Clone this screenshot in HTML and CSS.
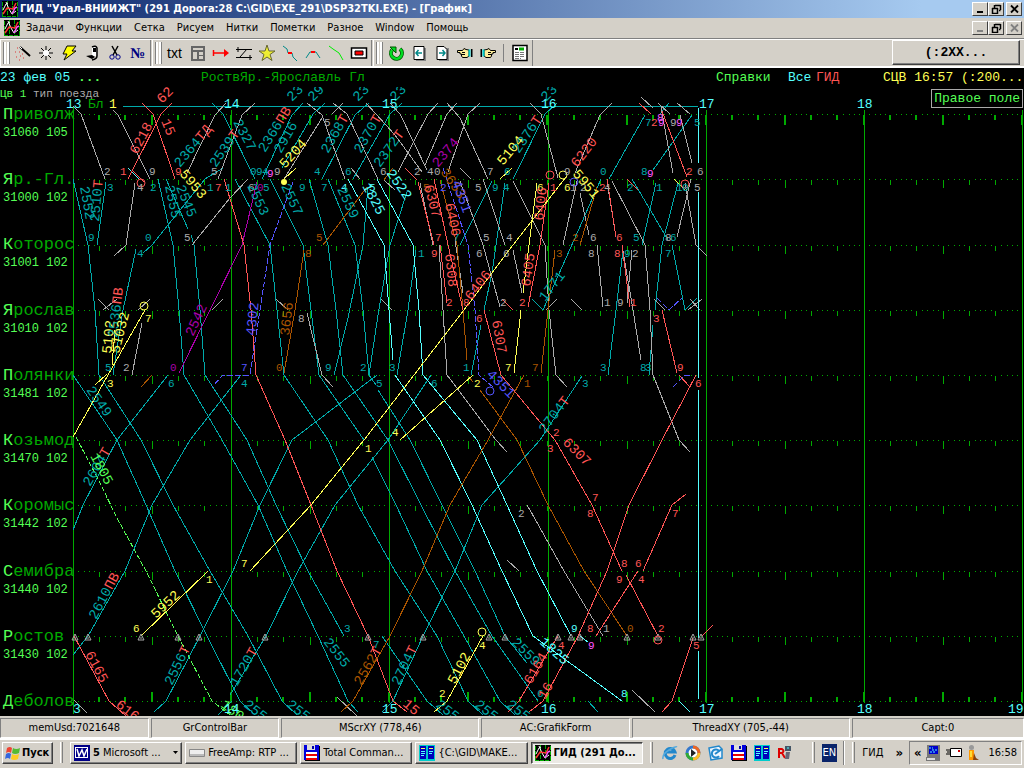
FILE: index.html
```html
<!DOCTYPE html>
<html lang="ru">
<head>
<meta charset="utf-8">
<title>ГИД "Урал-ВНИИЖТ"</title>
<link rel="stylesheet" href="styles.css">
</head>
<body>
<svg class="defs" aria-hidden="true">
  <symbol id="gid" viewBox="0 0 16 16"><path fill="#000" d="M0 0h16v16H0z"/><path d="M.5 1v14M5.500 0v16M10.500 0v16M15.500 1v14M0 15.500h16" stroke="#0a0" stroke-dasharray="4 1"/><path d="M1 9l3-6 2-1M4 1l3 7 3 5 4-3" stroke="#fff" fill="none"/><path d="M1 13l4-6 6 1 3-6" stroke="#f33" stroke-width="1.500" fill="none"/><path d="M10 13l3-6 2-1" stroke="#f5f" stroke-width="1.500" fill="none"/></symbol>
  <symbol id="floppy" viewBox="0 0 16 16"><path fill="#000" d="M1 1h15v15H1z"/><path fill="#00d" d="M0 0h15v15H0z"/><path fill="#ddd" d="M3 0h8v5H3z"/><path fill="#00a" d="M8 1h2v3H8z"/><path fill="#fff" d="M2 7h11v7H2z"/><path fill="#e00" d="M2 9h11v2H2zM2 13h11v2H2z"/></symbol>
  <symbol id="panels" viewBox="0 0 16 16"><path fill="#0cc" d="M0 0h16v16H0z"/><path fill="#00b" d="M1 1h6v13H1zM9 1h6v13H9z"/><path d="M2 3.500h4M10 3.500h4" stroke="#ff5"/><path d="M2 6.500h4M2 8.500h4M2 10.500h3M10 6.500h4M10 8.500h3" stroke="#5ff"/></symbol>
  <symbol id="mn" viewBox="0 0 11 10"><path d="M2 8h6" stroke="currentColor" stroke-width="2"/></symbol>
  <symbol id="rs" viewBox="0 0 11 10"><path d="M4 1.500h5.500M3.500 1v3M9.500 1v5M8 6.500h1.500M1 4.500h6M1.500 4v5.500h5V4" stroke="currentColor" fill="none" stroke-width="1.500"/></symbol>
  <symbol id="cl" viewBox="0 0 11 10"><path d="M2 1.500l7 7M9 1.500l-7 7" stroke="currentColor" stroke-width="1.800"/></symbol>
  <symbol id="hand" viewBox="0 0 18 12"><path d="M1.500 3.500h5L8 1.500l2 1 3 .5v6l-2 1.500H6.500L5.500 9V7H4V5.500H1.500z" fill="#ffef9a" stroke="#000"/><path d="M6 5.500h3M6 7.500h3" stroke="#000"/><path d="M12.500 2.500h2v7h-2z" fill="#0cc"/><path d="M15 2h1.500v8H15z" fill="#000"/></symbol>
</svg>

<header class="titlebar">
  <svg class="i16"><use href="#gid"/></svg>
  <h1>ГИД "Урал-ВНИИЖТ" (291 Дорога:28 C:\GID\EXE_291\DSP32TKI.EXE) - [График]</h1>
  <div class="winbtns">
    <button aria-label="Свернуть"><svg><use href="#mn"/></svg></button><button aria-label="Восстановить"><svg><use href="#rs"/></svg></button><button class="close" aria-label="Закрыть"><svg><use href="#cl"/></svg></button>
  </div>
</header>

<nav class="menubar">
  <svg class="i16"><use href="#gid"/></svg>
  <button>Задачи</button><button>Функции</button><button>Сетка</button><button>Рисуем</button><button>Нитки</button><button>Пометки</button><button>Разное</button><button>Window</button><button>Помощь</button>
  <div class="winbtns">
    <button disabled aria-label="Свернуть окно"><svg><use href="#mn"/></svg></button><button aria-label="Восстановить окно"><svg><use href="#rs"/></svg></button><button class="close" disabled aria-label="Закрыть окно"><svg><use href="#cl"/></svg></button>
  </div>
</nav>

<div class="toolbar">
  <div class="tools">
    <span class="grip"></span>
    <button aria-label="Мастер"><svg viewBox="0 0 18 18"><path d="M6 3l10 9" stroke="#000" stroke-width="2"/><path d="M6 3l2 2" stroke="#fff"/><path d="M3 4h1M1 8h1M5 8h1M8 10h1M2 13h1M6 12h1M9 14h1M5 16h1" stroke="#d33"/></svg></button>
    <button aria-label="Вспышка"><svg viewBox="0 0 18 18"><path d="M9 2v14M2 9h14M4 4l10 10M14 4L4 14" stroke="#000"/><circle cx="9" cy="9" r="3" fill="#fff"/></svg></button>
    <button aria-label="Молния"><svg viewBox="0 0 18 18"><path d="M7 2h9l-4 5h4L4 16l3-6H3z" fill="#ff0" stroke="#000"/></svg></button>
    <button aria-label="Объект"><svg viewBox="0 0 18 18"><path d="M9 3h4v9H9z" fill="#fff"/><path d="M9 3q4-2 5 1v8q0 3-5 4" fill="none" stroke="#000" stroke-width="1.500"/><path d="M10 4h3v4h-3zM3 12l6-1 3 2-3 2z" fill="#000"/></svg></button>
    <button aria-label="Вырезать"><svg viewBox="0 0 18 18"><path d="M6 2l5 9M12 2L7 11" stroke="#000" stroke-width="1.500"/><circle cx="6" cy="13" r="2.200" fill="none" stroke="#008"/><circle cx="12" cy="13" r="2.200" fill="none" stroke="#008"/></svg></button>
    <button class="num">№</button>
  </div>
  <div class="tools">
    <span class="grip"></span>
    <button class="txt">txt</button>
    <button aria-label="Таблица"><svg viewBox="0 0 18 18"><path d="M3 3h12v13H3zM3 7h12M9 7v9" fill="none" stroke="#666" stroke-width="2"/><path d="M9 11.500h6" stroke="#666"/></svg></button>
    <button aria-label="Отрезок"><svg viewBox="0 0 18 18"><path d="M1.500 6v6M1 9h13" stroke="#f00" stroke-width="1.500"/><path d="M12 5l5 4-5 4z" fill="#f00"/></svg></button>
    <button aria-label="Пути"><svg viewBox="0 0 18 18"><path d="M1 5.500h16M1 13.500h16M5 13l7-8M3 3v5M15 11v5" stroke="#000" fill="none"/></svg></button>
    <button aria-label="Звезда"><svg viewBox="0 0 18 18"><path d="M9 1l2 6h6l-5 3.500 2 6-5-3.500-5 3.500 2-6L1 7h6z" fill="#ee3" stroke="#663"/></svg></button>
    <button aria-label="Нитка"><svg viewBox="0 0 18 18"><path d="M2 2l4 3 1 4h4l1 4 4 4" fill="none" stroke="#088"/><path d="M7 9h4" stroke="#f00" stroke-width="2"/></svg></button>
    <button aria-label="Дуга"><svg viewBox="0 0 18 18"><path d="M2 14l4-6h6l4 6" fill="none" stroke="#088"/><path d="M7 8h4" stroke="#f00" stroke-width="2"/></svg></button>
    <button aria-label="Линия"><svg viewBox="0 0 18 18"><path d="M2 2l4 3 6 4 4 7" fill="none" stroke="#0e0"/></svg></button>
    <button aria-label="Рамка"><svg viewBox="0 0 18 18"><path d="M1.500 4h15v10h-15z" fill="#fff" stroke="#000" stroke-width="1.500"/><path d="M5 7h8v4H5z" fill="#f00" stroke="#000"/></svg></button>
  </div>
  <div class="tools">
    <span class="grip"></span>
    <button aria-label="Обновить"><svg viewBox="0 0 18 18"><path d="M5 6a5.500 5.500 0 1 0 8-1" fill="none" stroke="#050" stroke-width="4"/><path d="M5 6a5.500 5.500 0 1 0 8-1" fill="none" stroke="#0d2" stroke-width="2.500"/><path d="M3 3h6v6z" fill="#0d2" stroke="#050"/></svg></button>
    <button aria-label="Назад"><svg viewBox="0 0 18 18"><path d="M6 4h10v13H6z" fill="#888"/><path d="M4 2.500h10v13H4z" fill="#fff" stroke="#000"/><path d="M12 9H6m2.500-3L6 9l2.500 3" fill="none" stroke="#088" stroke-width="1.500"/></svg></button>
    <button aria-label="Вперёд"><svg viewBox="0 0 18 18"><path d="M6 4h10v13H6z" fill="#888"/><path d="M4 2.500h7l3 3v10H4z" fill="#fff" stroke="#000"/><path d="M6 9h6M9.500 6L12 9l-2.500 3" fill="none" stroke="#088" stroke-width="1.500"/></svg></button>
    <button aria-label="Влево"><svg class="hand"><use href="#hand"/></svg></button>
    <button aria-label="Вправо"><svg class="hand flip"><use href="#hand"/></svg></button>
    <span class="sep"></span>
    <button aria-label="Отчёт"><svg viewBox="0 0 18 18"><path d="M2 1.500h14v15H2z" fill="#fff" stroke="#000" stroke-width="1.500"/><path d="M4 5h3" stroke="#000" stroke-width="2"/><path d="M8 5h5" stroke="#0a0" stroke-width="3"/><path d="M4 8.500h10M4 10.500h9M4 12.500h10M4 14.500h6" stroke="#777" stroke-dasharray="4 1"/></svg></button>
  </div>
  <button class="mode">(:2XX...</button>
</div>

<div class="infoline">
  <span class="cy">23 фев 05 <b>...</b></span><span class="gr">РоствЯр.-Ярославль Гл</span><span class="lg">Справки</span><span class="cy">Все</span><span class="rd">ГИД</span><span class="ye">СЦВ 16:57 (:200...</span>
</div>

<main class="chart">
  <div class="side">
    <p class="legend">Цв 1 <i>тип поезда</i></p>
    <ol class="stations">
      <li><span>Приволж</span><small>31060 105</small></li>
      <li><span>Яр.-Гл.</span><small>31000 102</small></li>
      <li><span>Которос</span><small>31001 102</small></li>
      <li><span>Ярослав</span><small>31010 102</small></li>
      <li><span>Полянки</span><small>31481 102</small></li>
      <li><span>Козьмод</span><small>31470 102</small></li>
      <li><span>Коромыс</span><small>31442 102</small></li>
      <li><span>Семибра</span><small>31440 102</small></li>
      <li><span>Ростов</span><small>31430 102</small></li>
      <li><span>Деболов</span></li>
    </ol>
  </div>
  <svg class="graph" viewBox="73 87 951 629" preserveAspectRatio="xMinYMin meet" role="img" aria-label="График движения поездов">
    <defs>
      <path id="hd" d="M5 0h1m5 0h1m4 0h1m4 0h1m10 0h1m4 0h1m4 0h1m4 0h1m10 0h1m4 0h1m5 0h1m4 0h1m9 0h1m5 0h1m4 0h1m4 0h1m10 0h1m4 0h1m4 0h1m5 0h1m9 0h1m5 0h1m4 0h1m4 0h1"/>
      <path id="ht" d="M26.500 0v5M52.500 0v5M79.500 0v8M105.500 0v5M131.500 0v5M158.500 0v5"/>
      <g id="hour"><use href="#hd"/><use href="#ht"/></g>
      <g id="row"><use href="#hour" x="73"/><use href="#hour" x="231"/><use href="#hour" x="389"/><use href="#hour" x="548"/><use href="#hour" x="706"/><use href="#hour" x="864"/></g>
      <g id="edge"><use href="#hd"/><path stroke-width="2" d="M26 0v5M52 0v5M105 0v5M131 0v5"/><path stroke-width="2" d="M79 0v10M158 0v10"/></g>
      <g id="edges"><use href="#edge" x="73"/><use href="#edge" x="231"/><use href="#edge" x="389"/><use href="#edge" x="548"/><use href="#edge" x="706"/><use href="#edge" x="864"/></g>
      <path id="tri" d="M-3 3L0-3 3 3zM-1 1h2"/>
    </defs>

    <g class="grid">
      <path d="M73.500 106V714M231.500 110V703M389.500 110V703M548.500 110V703M706.500 110V703M864.500 110V703M1022.500 110V703"/>
      <use href="#edges" y="114.500"/><use href="#row" y="179.500"/><use href="#row" y="245.500"/><use href="#row" y="310.500"/><use href="#row" y="375.500"/><use href="#row" y="440.500"/><use href="#row" y="505.500"/><use href="#row" y="571.500"/><use href="#row" y="636.500"/>
      <use href="#edges" transform="translate(0 701.500) scale(1 -1)"/>
    </g>

    <g class="threads">
      <path class="te" d="M123 106.500H698
M73 179L88 245L95 310L99 375L141 440L173 505L210 571L248 636L282 701L297 715
M106 182L97 245M136 249L123 310L113 375
M158 179L173 245L179 310L184 375L222 440L258 505L287 571L318 636L348 701L358 712
M166 179L188 229M191 235L194 245L200 310L205 375L247 440L276 505L308 571L344 636
M205 179L152 245L143 253M212 103L223 114L255 179M223 168L205 179
M303 103L292 115L262 179M325 103L313 114L282 168
M235 179L270 245L277 310L284 375L328 440L358 505L395 571L437 636L468 701L483 715
M270 179L303 245L311 310L319 375L364 440M372 457L396 505L427 571L464 636L500 701L515 715
M309 179L328 245L336 310L343 375L388 440L421 505L455 571L492 636L538 701
M328 179L355 245L363 310L369 375L376 385M378 390L410 440L442 505L475 571L505 636L527 663
M369 103L355 115L322 179M402 103L390 114L353 179
M407 192L390 245L378 315L369 375M368 187L363 245L348 318L334 375M416 250L408 310L397 375
M377 375L292 440L260 505L233 571L200 636L166 701L154 712
M431 375L388 440L335 505L298 571L266 636L230 695
M241 375L190 440L152 505L125 571L88 636L73 655
M168 375L117 440L83 505L73 530
M73 375L117 440L146 505L175 571L207 636L240 701L255 715
M582 376L540 440L482 505L455 571L423 636L393 701L382 712
M382 636L427 701L443 715M557 103L545 114L513 179M645 115L609 179M692 115L653 170
M492 181L460 245M505 183L492 273L484 310M481 325L471 375
M601 179L543 310L532 299M632 179L668 240M656 183L642 245
M678 183L662 245L655 310M653 325L649 375M672 245L685 310L697 298M623 250L616 310L608 375
M588 701L598 712M669 103L660 114M218 715L232 701"/>
      <path class="wh" d="M73 106L81 114L105 179M113 110L118 115L150 179M226 103L215 115L187 173M255 103L242 115L218 179
M135 183L126 245L114 256M248 179L230 198L192 245M307 103L322 115L345 179M322 118L284 179
M333 103L347 114L378 179M343 103L332 114M366 103L395 135L422 172M390 103L400 114L427 170M438 103L428 114L398 172
M447 103L460 118L488 179M457 103L447 114L425 165M480 103L468 114L448 172M530 103L541 114L558 178
M612 103L600 115L575 173M641 97L653 108M661 107L673 173M677 103L690 114M680 115L692 163M658 103L670 114
M483 179L505 245M513 181L545 245L549 310L556 375L567 387M577 181L563 245M580 193L589 235
M612 181L645 245L650 310L653 375L679 440L690 452M460 181L483 245L500 307M513 250L522 293
M597 245L603 307M607 181L616 237M691 179L677 237M685 183L696 245L707 256M622 245L633 310L641 360M632 250L627 303
M420 183L433 245M439 245L443 310L447 375L496 440L507 452M455 240L463 293
M98 299L109 310M117 299L103 310M150 299L138 310M223 299L212 310M276 299L288 310M381 299L392 310M571 299L582 310M654 299L665 310M702 299L688 310M690 299L700 310M557 299L546 310
M307 313L322 375L333 387M142 323L132 375M337 697L357 716M74 700L87 713M507 560L519 571
M527 505L530 510L564 571L603 636M632 690L655 712M351 168L360 179M460 168L471 179M384 180L395 190"/>
      <path class="cy2" d="M348 179L384 245L389 310L393 360M395 375L440 440L472 505L502 571L533 636L622 701M377 179L413 245L419 310L423 375L477 440L507 505L537 571L571 636M128 168L140 180M580 636L588 642M679 701L690 712"/>
      <path class="or" d="M367 187L323 245M304 250L295 310L284 373M384 180L393 168M440 180L457 245L463 310L467 360M468 376L473 382M480 390L517 440L548 505L584 571L627 636M524 375L488 440L450 505L422 571L390 636L353 701L341 712M597 187L580 245M555 250L548 310L541 373M152 375L141 387"/>
      <path class="pu" d="M257 182L242 245L210 310L179 373"/>
      <path class="re" d="M142 103L153 114L175 179M172 103L161 114L128 179M132 170L144 182M224 179L244 245L251 310L256 375L285 440L311 505L337 571L368 636L393 701L407 712
M418 182L434 245M440 245L447 303M434 179L448 245L463 310M405 168L417 180M549 183L540 245L528 307M607 179L616 237M622 245L630 307
M662 111L687 177M639 103L651 114M627 179L638 190M484 310L501 375L555 440L592 505L622 571M626 575L658 636M662 310L677 373M679 375L690 387
M696 375L662 440L629 505L607 571L578 636L543 701L529 712M686 494L672 505L643 571M638 571L596 636M558 636L519 701L508 712
M693 638L672 701L662 712M713 625L702 636M74 636L109 701L126 716M502 299L513 310"/>
      <path class="bl" d="M293 182L270 245L260 310L250 375H223L212 387M443 168L468 245L475 310L479 375L493 387M673 387L685 375H692M657 298L669 310L682 298"/>
      <path class="li" d="M76 437L100 483L117 518L146 571L178 636L212 701L230 715"/>
      <path class="yl" d="M566 177L513 245L464 310L364 440L311 505L250 571M473 375L400 440M537 183L529 245L523 293M521 310L514 373M145 310L108 375M108 375L73 437M115 330L112 365M95 385L107 374M208 571L141 636M483 636L447 701L434 712M296 168L284 179M512 168L500 179M674 179L685 190"/>
    </g>
    <path class="now" d="M698.500 108V163M698.500 192V378M698.500 390V638M698.500 651V699"/>

    <g class="wh marks"><use href="#tri" x="75" y="637"/><use href="#tri" x="88" y="637"/><use href="#tri" x="141" y="637"/><use href="#tri" x="178" y="637"/><use href="#tri" x="199" y="637"/><use href="#tri" x="265" y="637"/><use href="#tri" x="368" y="637"/><use href="#tri" x="423" y="637"/><use href="#tri" x="489" y="637"/><use href="#tri" x="505" y="637"/><use href="#tri" x="558" y="637"/><use href="#tri" x="571" y="637"/><use href="#tri" x="580" y="637"/><use href="#tri" x="627" y="637"/><use href="#tri" x="658" y="637"/><use href="#tri" x="693" y="637"/><use href="#tri" x="701" y="637"/></g>
    <g class="marks"><circle class="yl" cx="482" cy="632" r="4"/><circle class="yl" cx="144" cy="306" r="4"/><circle class="yl" cx="563" cy="175" r="4"/><circle class="re" cx="550" cy="175" r="4"/><circle class="re" cx="685" cy="184" r="4"/><circle class="re" cx="658" cy="640" r="4"/><circle class="re" cx="141" cy="183" r="4"/><circle class="bs" cx="490" cy="391" r="4"/><circle class="bs" cx="574" cy="182" r="4"/><circle class="dot" cx="284" cy="182" r="3"/></g>

    <g class="digits">
      <text class="twh" x="324 670" y="126">59</text><text class="tte" x="645 694" y="126">75</text><text class="tre" x="651" y="126">2</text><text class="tpk" x="658 676" y="126">99</text><text class="tpk" x="657" y="121">8</text>
      <text class="twh" x="104 149 211 274 380 414 427 434 487 564 697" y="175">29596240796</text><text class="tre" x="120 175 686" y="175">192</text><text class="tte" x="250 256 262 314 345 504 600 641" y="175">09446608</text><text class="tpk" x="267 647" y="177">99</text>
      <text class="tte" x="107 150 207 225 263 299 321 492 503 627 656 676 682" y="191">3211597942110</text><text class="twh" x="137 248 475 570 580 604 694" y="191">4651245</text><text class="tre" x="215 550 599" y="191">712</text><text class="tpu" x="257" y="191">0</text><text class="tcy" x="341 369" y="191">45</text><text class="tor" x="423" y="191">5</text><text class="tbl" x="440" y="191">2</text><text class="tye" x="537 564" y="191">66</text>
      <text class="tte" x="88 145 453 633 670" y="241">90756</text><text class="twh" x="184 483 506 590 665" y="241">55468</text><text class="tor" x="316 572" y="241">52</text><text class="tre" x="435 616" y="241">76</text>
      <text class="tte" x="137 418 624 665" y="257">4197</text><text class="twh" x="476 503 588 632" y="257">6682</text><text class="tor" x="305 556" y="257">83</text><text class="tre" x="431 614" y="257">98</text>
      <text class="tre" x="446 463 519 630" y="306">2821</text><text class="twh" x="500 604 617" y="306">219</text>
      <text class="tye" x="145" y="322">7</text><text class="twh" x="298" y="322">8</text><text class="tre" x="476 653" y="322">63</text>
      <text class="tte" x="105 325 360 389 463 600 640 645" y="371">59231383</text><text class="twh" x="123" y="371">2</text><text class="tpu" x="170" y="371">0</text><text class="tbl" x="241" y="371">7</text><text class="tor" x="276 532" y="371">07</text><text class="tye" x="505" y="371">7</text><text class="tre" x="677" y="371">9</text>
      <text class="tye" x="107 474" y="387">32</text><text class="tte" x="168 241 376 431 582" y="387">64563</text><text class="tor" x="524" y="387">1</text><text class="tre" x="695" y="387">6</text>
      <text class="tye" x="392" y="436">4</text><text class="tre" x="553" y="436">2</text><text class="tye" x="365" y="452">1</text><text class="tre" x="547" y="452">3</text>
      <text class="tre" x="592" y="501">7</text><text class="tre" x="587 672" y="517">87</text><text class="twh" x="518" y="517">2</text>
      <text class="tye" x="241" y="567">7</text><text class="tre" x="621 635" y="567">86</text><text class="tye" x="206" y="583">1</text><text class="tre" x="616 638" y="583">94</text>
      <text class="tye" x="133" y="632">6</text><text class="tte" x="344" y="632">3</text><text class="tcy" x="571" y="632">9</text><text class="tre" x="587 658" y="632">82</text><text class="twh" x="603" y="632">1</text><text class="tor" x="627" y="632">0</text>
      <text class="tye" x="479" y="649">4</text><text class="tre" x="558 693" y="649">45</text><text class="tte" x="373" y="648">7</text><text class="tpk" x="588" y="649">9</text><text class="tye" x="439" y="697">2</text><text class="tcy" x="621" y="697">8</text><text class="tte" x="537" y="697">6</text>
    </g>

    <g class="trains">
      <text class="tre" transform="translate(162 104) rotate(-45)">62</text><text class="tte" transform="translate(292 102) rotate(-45)">23</text><text class="tte" transform="translate(313 102) rotate(-45)">29</text><text class="tte" transform="translate(358 102) rotate(-45)">23</text><text class="tte" transform="translate(395 102) rotate(-45)">23</text><text class="tte" transform="translate(546 102) rotate(-45)">23</text>
      <text class="tre" transform="translate(137 155) rotate(-62)">6218</text><text class="tre" transform="translate(161 121) rotate(68)">15</text>
      <text class="tte" transform="translate(180 168) rotate(-50)">2364<tspan class="tre">ТД</tspan></text><text class="tte" transform="translate(216 168) rotate(-55)">2539<tspan class="tre">Т</tspan></text>
      <text class="tye" transform="translate(179 174) rotate(50)">5953</text><text class="tte" transform="translate(165 186) rotate(78)">2555</text><text class="tte" transform="translate(176 187) rotate(68)">2545</text>
      <text class="tte" transform="translate(80 187) rotate(80)">2552</text><text class="tte" transform="translate(99 222) rotate(-85)">2510<tspan class="tre">Т</tspan></text>
      <text class="tte" transform="translate(233 122) rotate(62)">2327</text><text class="tte" transform="translate(265 153) rotate(-58)">2366<tspan class="tre">ПВ</tspan></text><text class="tte" transform="translate(281 154) rotate(-60)">2916</text><text class="tye" transform="translate(285 169) rotate(-48)">5204</text>
      <text class="tte" transform="translate(328 154) rotate(-60)">2368<tspan class="tre">Т</tspan></text><text class="tte" transform="translate(361 154) rotate(-60)">2370<tspan class="tre">Т</tspan></text><text class="tte" transform="translate(380 168) rotate(-54)">2372<tspan class="tre">Т</tspan></text><text class="tpu" transform="translate(438 168) rotate(-50)">2374</text>
      <text class="tte" transform="translate(247 186) rotate(65)">2553</text><text class="tte" transform="translate(281 186) rotate(65)">2557</text><text class="tte" transform="translate(337 189) rotate(65)">2559</text><text class="tcy" transform="translate(362 186) rotate(62)">1825</text><text class="tcy" transform="translate(386 173) rotate(55)">2522</text>
      <text class="tre" transform="translate(424 186) rotate(75)">6307</text><text class="tre" transform="translate(445 204) rotate(78)">6406</text><text class="tre" transform="translate(445 254) rotate(84)">6308</text><text class="tor" transform="translate(440 172) rotate(55)">3653</text><text class="tbl" transform="translate(452 182) rotate(70)">4351</text>
      <text class="tye" transform="translate(503 166) rotate(-50)">5104</text><text class="tte" transform="translate(519 154) rotate(-56)">2376<tspan class="tre">Т</tspan></text><text class="tre" transform="translate(577 168) rotate(-52)">6220</text><text class="tye" transform="translate(572 174) rotate(50)">5951</text>
      <text class="tre" transform="translate(543 221) rotate(-84)">6406</text><text class="tre" transform="translate(530 287) rotate(-82)">6405</text><text class="tre" transform="translate(471 301) rotate(-52)">6406</text><text class="tte" transform="translate(545 302) rotate(-52)">1771</text>
      <text class="tye" transform="translate(111 354) rotate(-84)">5102</text><text class="tte" transform="translate(117 338) rotate(-83)">2536<tspan class="tre">ПВ</tspan></text><text class="tye" transform="translate(119 354) rotate(-76)">51032</text><text class="tpu" transform="translate(193 337) rotate(-65)">2542</text><text class="tbl" transform="translate(255 336) rotate(-84)">4302</text><text class="tor" transform="translate(289 336) rotate(-83)">3656</text>
      <text class="tte" transform="translate(86 390) rotate(55)">2549</text><text class="tte" transform="translate(90 487) rotate(-60)">2604<tspan class="tre">Т</tspan></text><text class="tli" transform="translate(90 456) rotate(62)">1805</text>
      <text class="tbl" transform="translate(486 375) rotate(45)">4351</text><text class="tre" transform="translate(492 321) rotate(80)">6307</text><text class="tte" transform="translate(545 434) rotate(-53)">2704<tspan class="tre">Т</tspan></text><text class="tre" transform="translate(562 443) rotate(45)">6307</text>
      <text class="tte" transform="translate(96 620) rotate(-62)">2610<tspan class="tre">ПВ</tspan></text><text class="tye" transform="translate(156 619) rotate(-43)">5952</text><text class="tre" transform="translate(85 654) rotate(62)">6165</text><text class="tte" transform="translate(172 686) rotate(-64)">2556<tspan class="tre">Т</tspan></text><text class="tre" transform="translate(115 706) rotate(38)">616</text>
      <text class="tte" transform="translate(237 687) rotate(-60)">1720<tspan class="tre">Т</tspan></text><text class="tte" transform="translate(323 642) rotate(52)">2555</text><text class="tor" transform="translate(361 686) rotate(-60)">2562<tspan class="tre">Т</tspan></text><text class="tte" transform="translate(399 686) rotate(-64)">2704<tspan class="tre">Т</tspan></text><text class="tye" transform="translate(455 685) rotate(-62)">5102</text>
      <text class="tli" transform="translate(220 706) rotate(38)">180</text><text class="tte" transform="translate(243 706) rotate(38)">255</text><text class="tte" transform="translate(286 706) rotate(38)">255</text><text class="tre" transform="translate(402 705) rotate(40)">15</text><text class="tte" transform="translate(435 706) rotate(38)">255</text><text class="tte" transform="translate(474 706) rotate(38)">255</text><text class="tte" transform="translate(506 706) rotate(38)">255</text>
      <text class="tcy" transform="translate(539 643) rotate(42)">1825</text><text class="tte" transform="translate(511 643) rotate(45)">2559</text><text class="tre" transform="translate(531 685) rotate(-60)">6164</text><text class="tre" transform="translate(545 700) rotate(-60)">16</text>
    </g>

    <g class="hours">
      <text x="66" y="108">13</text><text x="224" y="108">14</text><text x="382" y="108">15</text><text x="541" y="108">16</text><text x="699" y="108">17</text><text x="857" y="108">18</text>
      <text x="73" y="713">3</text><text x="224" y="713">14</text><text x="382" y="713">15</text><text x="541" y="713">16</text><text x="699" y="713">17</text><text x="857" y="713">18</text><text x="1008" y="713">19</text>
      <text class="tgr" x="88" y="108">Бл</text><text class="tye" x="109" y="108">1</text>
    </g>
  </svg>
  <button class="field">Правое поле</button>
</main>

<footer class="status"><span>memUsd:7021648</span><span>GrControlBar</span><span>MScrXY (778,46)</span><span>AC:GrafikForm</span><span>ThreadXY (705,-44)</span><span>Capt:0</span></footer>

<div class="taskbar">
  <button class="start"><svg class="i16" viewBox="0 0 16 16"><path fill="#e43" d="M2 3q3-2 5 0L6 8Q4 6 1 8z"/><path fill="#5b3" d="M8 3q3 2 7 0l-1 5q-4 2-7 0z"/><path fill="#36d" d="M1 9q3-2 5 0l-1 5q-2-2-5 0z"/><path fill="#fc2" d="M7 9q3 2 7 0l-1 5q-4 2-7 0z"/></svg>Пуск</button>
  <span class="grip one"></span>
  <div class="tasks">
    <button><svg class="i16" viewBox="0 0 16 16"><path fill="#008" d="M0 0h16v16H0z"/><path fill="#fff" d="M1 2h13v11H1z"/><path fill="#008" d="M2 3h11v9H2z"/><path d="M3 4l2 7 3-6 2 6 3-7" fill="none" stroke="#fff" stroke-width="1.500"/></svg><span><b>5</b> Microsoft ...</span><svg class="arrow" viewBox="0 0 5 3"><path d="M0 0h5L2.500 3z"/></svg></button>
    <button><svg class="i16" viewBox="0 0 16 16"><rect x="0" y="4" width="16" height="8" rx="1" fill="#888"/><path fill="#eee" d="M1 5h14v4H1z"/><path fill="#bbb" d="M1 9h14v2H1z"/></svg><span>FreeAmp: RTP ...</span></button>
    <button><svg class="i16"><use href="#floppy"/></svg><span>Total Comman...</span></button>
    <button><svg class="i16"><use href="#panels"/></svg><span>{C:\GID\MAKE...</span></button>
    <button class="active"><svg class="i16"><use href="#gid"/></svg><span>ГИД (291 До...</span></button>
  </div>
  <span class="grip one"></span>
  <div class="quick">
    <a href="#ie" aria-label="Internet Explorer"><svg class="i16" viewBox="0 0 16 16"><path d="M13 10a5 5 0 1 1 0-3H4" fill="none" stroke="#28c" stroke-width="3"/><path d="M1 14Q0 9 7 5t8-3" fill="none" stroke="#5ad" stroke-width="1.500"/></svg></a>
    <a href="#media" aria-label="Media Player"><svg class="i16" viewBox="0 0 16 16"><circle cx="8" cy="8" r="6" fill="#fff" stroke="#37c" stroke-width="3"/><path d="M8 2a6 6 0 0 1 6 6" fill="none" stroke="#e62" stroke-width="3"/><path d="M14 8a6 6 0 0 1-6 6" fill="none" stroke="#fb2" stroke-width="3"/><path d="M2 8a6 6 0 0 0 6 6" fill="none" stroke="#3a3" stroke-width="3"/><path d="M6 4l5 4-5 4z" fill="#222"/></svg></a>
    <a href="#mail" aria-label="Outlook Express"><svg class="i16" viewBox="0 0 16 16"><path d="M1 3l10-2 3 3v9l-11 2z" fill="#eef6ff" stroke="#28c" stroke-width="1.500"/><path d="M11 6a4 4 0 1 0 0 5M7 9l7-5" fill="none" stroke="#28c" stroke-width="2"/></svg></a>
    <a href="#save" aria-label="Total Commander"><svg class="i16"><use href="#floppy"/></svg></a>
    <a href="#far" aria-label="FAR"><svg class="i16"><use href="#panels"/></svg></a>
    <a href="#radmin" aria-label="Remote"><svg class="i16" viewBox="0 0 16 16"><path d="M2 13V4h3q3 2 0 4H2m3 0l3 5" fill="none" stroke="#d00" stroke-width="2"/><path d="M8 1h6v5H8z" fill="#456"/><path d="M9 7h4l-1 7H8z" fill="#667"/><path d="M10 3h2" stroke="#5ff"/></svg></a>
  </div>
  <span class="grip one"></span>
  <span class="lang">EN</span>
  <span class="divider"></span>
  <span class="grip one"></span>
  <span class="band">ГИД <b>»</b></span>
  <div class="tray"><b>«</b>
    <svg class="i16" viewBox="0 0 16 16"><path fill="#777" d="M1 0h13v12H1zM0 12h14v4H0z"/><path fill="#00c" d="M3 1h9v8H3z"/><path d="M3 3h4M6 5h5M4 7h6" stroke="#5ff" stroke-dasharray="2 1"/><path fill="#ddd" d="M1 13h8v2H1z"/></svg>
    <svg class="i16" viewBox="0 0 16 16"><path fill="#fff" stroke="#000" d="M4.500 3.500h11v8h-11z"/><path fill="#c00" d="M12 5h2v2h-2z"/><path d="M0 5h4M1 7h4M0 9h4" stroke="#000"/></svg>
    <svg class="i16" viewBox="0 0 16 16"><path fill="#f90" d="M3 5h5v10H3z"/><path fill="#fd3" d="M4 6h2v6H4z"/><circle cx="5.500" cy="2.500" r="2.500" fill="#999"/><path fill="#841" d="M8 8l2 5 3 2H7z"/></svg>
    <time>16:58</time>
  </div>
</div>
</body>
</html>
```

FILE: styles.css
```css
* { box-sizing: border-box; }
body {
  margin: 0;
  min-height: 100vh;
  display: flex;
  flex-direction: column;
  overflow: hidden;
  background: #d4d0c8;
  color: #000;
  font: 11px/14px "DejaVu Sans Condensed", "DejaVu Sans", sans-serif;
}
button { font: inherit; color: inherit; background: none; border: 0; padding: 0; white-space: nowrap; }
svg { display: block; flex: none; }
.defs { position: absolute; width: 0; height: 0; }
.i16 { width: 16px; height: 16px; }

.titlebar, .menubar { display: flex; align-items: center; padding: 0 2px; }
.titlebar { height: 18px; background: linear-gradient(90deg, #0a246a, #a6caf0 90%); color: #fff; }
.titlebar h1 { flex: 1; margin: 0 2px; font-size: 11px; line-height: 14px; white-space: nowrap; }
.menubar { height: 21px; padding-left: 4px; border-bottom: 1px solid #808080; }
.menubar > button { padding: 0 6px; }
.winbtns { display: flex; margin-left: auto; }
.winbtns button {
  width: 16px; height: 14px;
  display: flex; align-items: center; justify-content: center;
  background: #d4d0c8; color: #000;
  border: 1px solid; border-color: #fff #404040 #404040 #fff;
}
.winbtns svg { width: 11px; height: 10px; }
.winbtns .close { margin-left: 2px; }
.winbtns button:disabled { color: #808080; }

.toolbar { display: flex; height: 29px; border-top: 1px solid #fff; border-bottom: 2px solid #fff; }
.tools { display: flex; align-items: center; border-right: 1px solid #808080; border-left: 1px solid #fff; padding: 0 1px; margin-right: 1px; }
.tools button { width: 23px; height: 24px; display: flex; align-items: center; justify-content: center; }
.tools svg { width: 18px; height: 18px; }
.tools svg.hand { width: 18px; height: 12px; }
.flip { transform: scaleX(-1); }
.tools .num { color: #000080; font: bold 15px/16px "Liberation Serif", serif; }
.tools .txt { font: 14px/16px "Liberation Sans", sans-serif; }
.grip { width: 7px; height: 22px; margin: 0 1px; border: solid; border-width: 0 1px; border-color: #808080; box-shadow: inset 2px 0 #fff, inset -2px 0 #fff; }
.grip.one { width: 3px; height: 21px; border-width: 0 1px 0 0; box-shadow: inset 1px 0 #fff; }
.sep { width: 1px; height: 18px; margin: 0 4px; background: #808080; }
.mode { width: 128px; height: 25px; margin: 0 4px 0 auto; border: 1px solid; border-color: #fff #404040 #404040 #fff; box-shadow: inset -1px -1px #808080; font: bold 13px/16px "Liberation Mono", monospace; }

.infoline {
  display: grid;
  grid-template-columns: 201fr 515fr 72fr 28fr 67fr 141fr;
  height: 19px;
  background: #000;
  font: 13px/19px "Liberation Mono", monospace;
  white-space: nowrap;
}
.infoline span { min-width: 0; }
.cy { color: #55ffff; }
.gr { color: #00aa00; }
.lg, .cy b { color: #55ff55; }
.rd { color: #ff5555; }
.ye { color: #ffff55; }

.chart { position: relative; flex: 1; display: grid; grid-template-columns: 73px 1fr; background: #000; overflow: hidden; font-family: "Liberation Mono", monospace; }
.side { display: flex; flex-direction: column; white-space: nowrap; }
.legend { margin: 0; height: 19px; font-size: 11px; line-height: 14px; color: #55ff55; }
.legend i { color: #aaa; font-style: normal; }
.stations { flex: 1; margin: 0; padding: 0 0 0 3px; list-style: none; display: grid; grid-template-rows: repeat(9, 1fr) 23px; }
.stations span { display: block; font-size: 17px; line-height: 18px; color: #00aa00; }
.stations span::first-letter { color: #55ff55; }
.stations small { display: block; font-size: 12px; line-height: 18px; color: #55ff55; }
.graph { width: 100%; height: 100%; overflow: visible; }
.field { position: absolute; top: 2px; right: 1px; padding: 0 2px; border: 1px solid #aaa; background: #000; color: #55ff55; font-size: 13px; line-height: 17px; }

.grid { stroke: #00aa00; fill: none; shape-rendering: crispEdges; }
.threads { fill: none; shape-rendering: crispEdges; }
.marks { fill: none; }
.te { stroke: #00aaaa; }
.wh { stroke: #aaaaaa; }
.cy2 { stroke: #55ffff; }
.re { stroke: #ff5555; }
.yl { stroke: #ffff55; }
.or { stroke: #aa5500; }
.pu { stroke: #aa00aa; }
.bl { stroke: #5555ff; stroke-dasharray: 6 2; }
.bs { stroke: #5555ff; }
.li { stroke: #55ff55; stroke-dasharray: 5 2; }
.dot { fill: #ffff55; }
.now { stroke: #55ffff; shape-rendering: crispEdges; }
.digits { font-size: 11px; }
.trains { font-size: 14px; }
.hours { font-size: 13px; fill: #55ffff; }
.tte { fill: #00aaaa; }
.twh { fill: #aaaaaa; }
.tcy { fill: #55ffff; }
.tre { fill: #ff5555; }
.tye { fill: #ffff55; }
.tor { fill: #aa5500; }
.tpu { fill: #aa00aa; }
.tpk { fill: #ff55ff; }
.tbl { fill: #5555ff; }
.tli { fill: #55ff55; }
.tgr { fill: #00aa00; }

.status { display: grid; grid-template-columns: 150fr 130fr 200fr 150fr 220fr 174fr; gap: 2px; height: 24px; padding-top: 2px; border-bottom: 2px solid #fff; }
.status span { display: flex; align-items: center; justify-content: center; height: 20px; border: 1px solid; border-color: #808080 #fff #fff #808080; white-space: nowrap; }

.taskbar { display: flex; align-items: center; height: 28px; padding: 0 2px 3px; gap: 6px; white-space: nowrap; }
.start, .tasks button { display: flex; align-items: center; height: 22px; padding: 0 3px; gap: 3px; border: 1px solid; border-color: #fff #404040 #404040 #fff; box-shadow: inset -1px -1px #808080; }
.start { width: 51px; padding: 0 2px; gap: 1px; font-weight: bold; }
.tasks { flex: 1; min-width: 0; display: flex; gap: 3px; }
.tasks button { flex: 1; min-width: 0; }
.tasks span { flex: 1; min-width: 0; overflow: hidden; text-align: left; }
.tasks .active { font-weight: bold; border-color: #404040 #fff #fff #404040; box-shadow: inset 1px 1px #808080; background: #ebe9e4; }
.arrow { width: 5px; height: 3px; }
.quick { display: flex; gap: 7px; padding: 0 12px 0 2px; }
.lang { padding: 2px 1px; background: #0a246a; color: #fff; }
.divider { width: 2px; height: 24px; border-left: 1px solid #808080; border-right: 1px solid #fff; }
.band { display: flex; gap: 12px; }
.band b, .tray b { font-size: 13px; }
.tray { display: flex; align-items: center; gap: 4px; height: 24px; width: 113px; padding: 0 4px; border: 1px solid; border-color: #808080 #fff #fff #808080; }
.tray time { margin-left: auto; }
```
